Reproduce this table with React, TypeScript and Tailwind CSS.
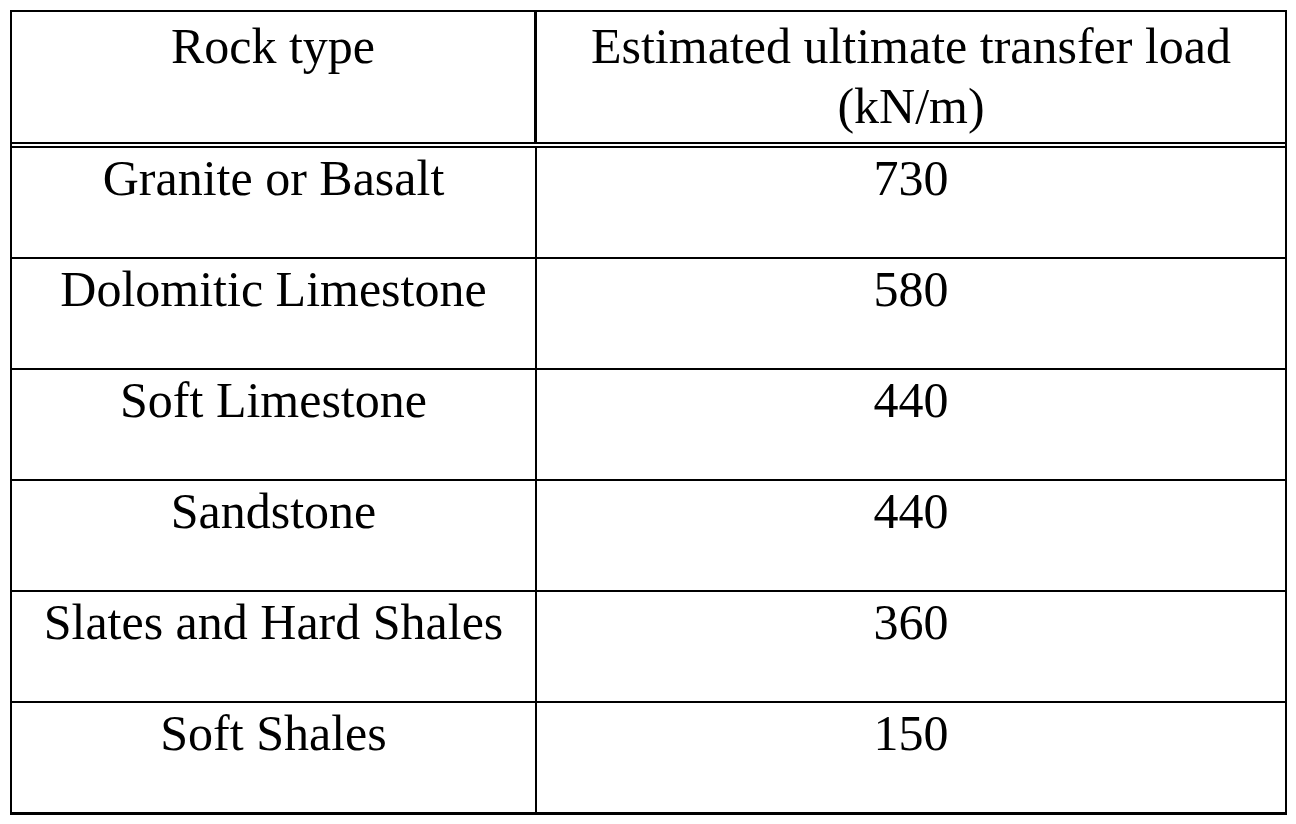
const rows: [string, string][] = [
  ['Granite or Basalt', '730'],
  ['Dolomitic Limestone', '580'],
  ['Soft Limestone', '440'],
  ['Sandstone', '440'],
  ['Slates and Hard Shales', '360'],
  ['Soft Shales', '150'],
]

export default function App() {
  return (
    <div className="min-h-screen bg-white pt-[10px] pl-[10px] font-['Liberation_Serif',serif] text-[50px] leading-[60px] text-black">
      <div className="w-[1277px] border-2 border-b-[3px] border-black">
        <div className="grid grid-cols-[525px_1fr] border-b-[6px] border-double border-black">
          <div className="h-[130px] border-r-[3px] border-black pt-[4px] text-center">Rock type</div>
          <div className="h-[130px] pt-[4px] text-center">
            Estimated ultimate transfer load
            <br />
            (kN/m)
          </div>
        </div>
        {rows.map(([rock, load], i) => (
          <div
            key={rock}
            className={`grid grid-cols-[525px_1fr] ${i < rows.length - 1 ? 'h-[111px] border-b-2 border-black' : 'h-[109px]'}`}
          >
            <div className="border-r-2 border-black text-center whitespace-nowrap">{rock}</div>
            <div className="text-center">{load}</div>
          </div>
        ))}
      </div>
    </div>
  )
}
